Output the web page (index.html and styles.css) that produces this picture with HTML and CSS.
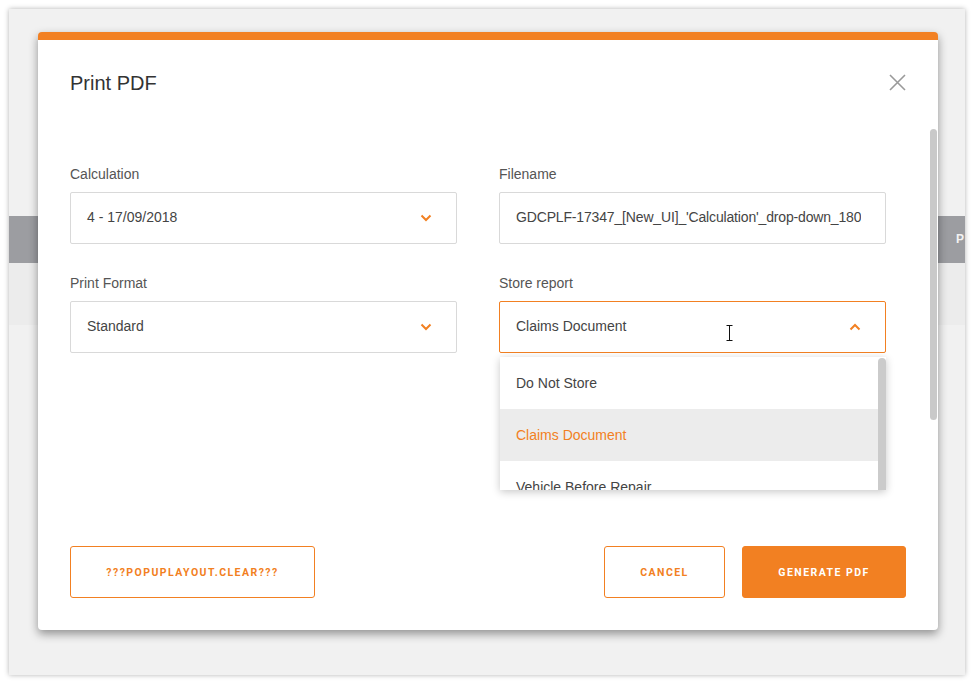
FILE: index.html
```html
<!DOCTYPE html>
<html>
<head>
<meta charset="utf-8">
<link rel="stylesheet" href="styles.css">
</head>
<body>
<div class="frame">
  <div class="bg-space"></div>
  <div class="bg-bar">P</div>
  <div class="bg-below"></div>

  <div class="modal">
    <div class="modal-header">
      <h1 class="title">Print PDF</h1>
      <svg class="close" width="17" height="17" viewBox="0 0 17 17"><path d="M1 1 L16 16 M16 1 L1 16" stroke="#9a9a9a" stroke-width="1.6" fill="none"/></svg>
    </div>

    <div class="form">
      <div class="field">
        <div class="label">Calculation</div>
        <div class="box">
          <span class="value">4 - 17/09/2018</span>
          <svg class="chev" width="12" height="8" viewBox="0 0 12 8"><polyline points="1.5,1.5 6,6 10.5,1.5" fill="none" stroke="#f28022" stroke-width="2"/></svg>
        </div>
      </div>
      <div class="field">
        <div class="label">Filename</div>
        <div class="box">
          <span class="value clip">GDCPLF-17347_[New_UI]_'Calculation'_drop-down_18092018.pdf</span>
        </div>
      </div>
      <div class="field">
        <div class="label">Print Format</div>
        <div class="box">
          <span class="value">Standard</span>
          <svg class="chev" width="12" height="8" viewBox="0 0 12 8"><polyline points="1.5,1.5 6,6 10.5,1.5" fill="none" stroke="#f28022" stroke-width="2"/></svg>
        </div>
      </div>
      <div class="field store">
        <div class="label">Store report</div>
        <div class="box active">
          <span class="value">Claims Document</span>
          <svg class="chev" width="12" height="8" viewBox="0 0 12 8"><polyline points="1.5,6.5 6,2 10.5,6.5" fill="none" stroke="#f28022" stroke-width="2"/></svg>
          <svg class="ibeam" width="7" height="16" viewBox="0 0 7 16"><path d="M0.5 0.5 H6.5 M3.5 0.5 V15.5 M0.5 15.5 H6.5" stroke="#111" stroke-width="1" fill="none"/></svg>
        </div>
        <div class="menu">
          <div class="opt">Do Not Store</div>
          <div class="opt selected">Claims Document</div>
          <div class="opt">Vehicle Before Repair</div>
          <div class="menu-scroll"></div>
        </div>
      </div>
    </div>

    <div class="footer">
      <button class="btn btn-clear">???POPUPLAYOUT.CLEAR???</button>
      <div class="actions">
        <button class="btn btn-cancel">CANCEL</button>
        <button class="btn btn-primary">GENERATE PDF</button>
      </div>
    </div>

    <div class="modal-scroll"></div>
  </div>
</div>
</body>
</html>
```

FILE: styles.css
```css
html, body {
  margin: 0;
  padding: 0;
  background: #ffffff;
}

body {
  font-family: "Liberation Sans", Arial, sans-serif;
  width: 973px;
  height: 683px;
  overflow: hidden;
}

.frame {
  position: relative;
  margin: 9px 8px 8px 9px;
  width: 956px;
  height: 666px;
  background: #f1f1f1;
  box-shadow: 0 0 5px rgba(0, 0, 0, 0.3);
  overflow: hidden;
}

.bg-space {
  height: 207px;
}

.bg-bar {
  height: 47px;
  background: #9c9da1;
  color: #f2f2f2;
  font-size: 12px;
  font-weight: bold;
  line-height: 47px;
  padding-left: 947px;
  white-space: nowrap;
}

.bg-below {
  height: 62px;
  background: #ececec;
}

.modal {
  position: absolute;
  left: 29px;
  top: 23px;
  width: 900px;
  height: 598px;
  box-sizing: border-box;
  background: #fff;
  border-top: 8px solid #f28022;
  border-radius: 4px;
  box-shadow: 0 4px 10px rgba(0, 0, 0, 0.4);
  padding: 0 32px 32px 32px;
  display: flex;
  flex-direction: column;
}

.modal-header {
  display: flex;
  justify-content: space-between;
  align-items: center;
  padding-top: 31px;
}

.title {
  margin: 0;
  font-size: 20px;
  line-height: 24px;
  font-weight: normal;
  color: #333;
}

.close {
  display: block;
  margin-top: -2px;
}

.form {
  margin-top: 71px;
  display: grid;
  grid-template-columns: 387px 387px;
  column-gap: 42px;
  row-gap: 31px;
}

.field {
  position: relative;
}

.label {
  font-size: 14px;
  line-height: 17px;
  color: #555;
  margin-bottom: 9px;
}

.box {
  position: relative;
  height: 52px;
  box-sizing: border-box;
  border: 1px solid #d9d9d9;
  border-radius: 2px;
  padding: 0 24px 0 16px;
  display: flex;
  align-items: center;
  justify-content: space-between;
  font-size: 14px;
  color: #444;
}

.box.active {
  border-color: #f28022;
}

.value {
  white-space: nowrap;
  margin-bottom: 2px;
}

.value.clip {
  display: block;
  overflow: hidden;
  width: 355px;
  letter-spacing: -0.16px;
}

.chev {
  display: block;
}

.ibeam {
  position: absolute;
  left: 226px;
  top: 23px;
}

.menu {
  position: absolute;
  left: 1px;
  right: 0;
  top: calc(100% + 4px);
  height: 133px;
  overflow: hidden;
  background: #fff;
  box-shadow: 0 2px 8px rgba(0, 0, 0, 0.22);
  padding-right: 8px;
}

.opt {
  height: 52px;
  display: flex;
  align-items: center;
  padding-left: 16px;
  padding-bottom: 1px;
  box-sizing: border-box;
  font-size: 14px;
  color: #444;
}

.opt.selected {
  background: #ececec;
  color: #f28022;
}

.menu-scroll {
  position: absolute;
  right: 0;
  top: 1px;
  width: 8px;
  height: 140px;
  background: #cbcbcb;
  border-radius: 4px 4px 0 0;
}

.footer {
  margin-top: auto;
  display: flex;
  justify-content: space-between;
  align-items: center;
}

.actions {
  display: flex;
  gap: 17px;
}

.btn {
  height: 52px;
  box-sizing: border-box;
  border: 1px solid #f28022;
  border-radius: 3px;
  background: #fff;
  color: #f28022;
  font-family: Roboto, "Liberation Sans", sans-serif;
  font-size: 10.5px;
  font-weight: bold;
  letter-spacing: 1.45px;
  padding: 0;
}

.btn-clear {
  width: 245px;
}

.btn-cancel {
  width: 121px;
}

.btn-primary {
  width: 164px;
  background: #f28022;
  color: #fff;
}

.modal-scroll {
  position: absolute;
  right: 1px;
  top: 89px;
  width: 7px;
  height: 291px;
  background: #c9c9c9;
  border-radius: 4px;
}
```
